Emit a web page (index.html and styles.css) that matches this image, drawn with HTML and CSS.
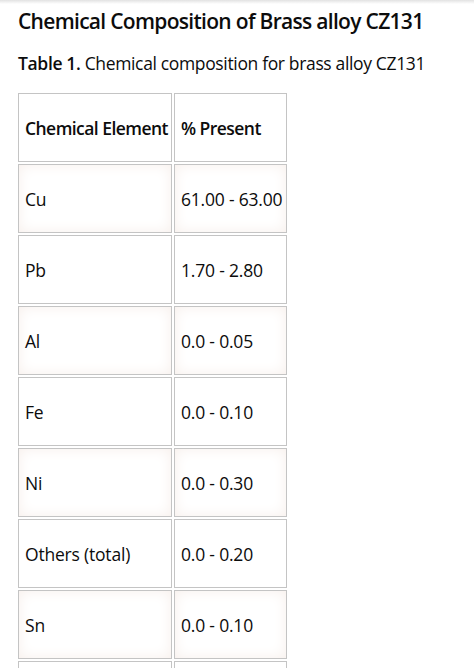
FILE: index.html
```html
<!DOCTYPE html>
<html>
<head>
<meta charset="utf-8">
<link rel="stylesheet" href="styles.css">
</head>
<body>
<div class="topshade"></div>
<main class="content">
  <h1 class="title">Chemical Composition of Brass alloy CZ131</h1>
  <p class="caption"><b>Table 1.</b> Chemical composition for brass alloy CZ131</p>
  <table class="comp">
    <thead>
      <tr><th class="c1">Chemical Element</th><th class="c2">% Present</th></tr>
    </thead>
    <tbody>
      <tr class="tint"><td>Cu</td><td>61.00 - 63.00</td></tr>
      <tr><td>Pb</td><td>1.70 - 2.80</td></tr>
      <tr class="tint"><td>Al</td><td>0.0 - 0.05</td></tr>
      <tr><td>Fe</td><td>0.0 - 0.10</td></tr>
      <tr class="tint"><td>Ni</td><td>0.0 - 0.30</td></tr>
      <tr><td>Others (total)</td><td>0.0 - 0.20</td></tr>
      <tr class="tint"><td>Sn</td><td>0.0 - 0.10</td></tr>
      <tr><td></td><td></td></tr>
    </tbody>
  </table>
</main>
</body>
</html>
```

FILE: styles.css
```css
html, body {
  margin: 0;
  padding: 0;
  background: #ffffff;
}
body {
  font-family: "Open Sans", "Noto Sans", sans-serif;
  color: #0c0c0c;
  overflow: hidden;
}
.topshade {
  height: 4px;
  background: linear-gradient(#e2e2e2, #ffffff);
}
.content {
  padding: 0 18px;
}
.title {
  margin: 3px 0 0 0;
  font-size: 21px;
  line-height: 28px;
  font-weight: 600;
  letter-spacing: -0.7px;
}
.caption {
  margin: 16px 0 0 0;
  font-size: 17.5px;
  line-height: 24px;
  font-weight: 400;
  letter-spacing: -0.35px;
}
.caption b {
  font-weight: 600;
}
.comp {
  margin-top: 16px;
  border-collapse: separate;
  border-spacing: 2px;
  margin-left: -2px;
  table-layout: fixed;
  width: 273px;
}
.comp th, .comp td {
  border: 1px solid #c4c4c4;
  height: 69px;
  box-sizing: border-box;
  padding: 0 4px 0 6px;
  font-size: 17.5px;
  letter-spacing: -0.2px;
  text-align: left;
  vertical-align: middle;
  white-space: nowrap;
}
.comp th {
  font-weight: 600;
  letter-spacing: -0.55px;
}
.comp .c1 {
  width: 154px;
}
.comp .c2 {
  width: 113px;
}
.comp .tint td {
  box-shadow: inset 0 0 14px #f7efeb;
}
```
